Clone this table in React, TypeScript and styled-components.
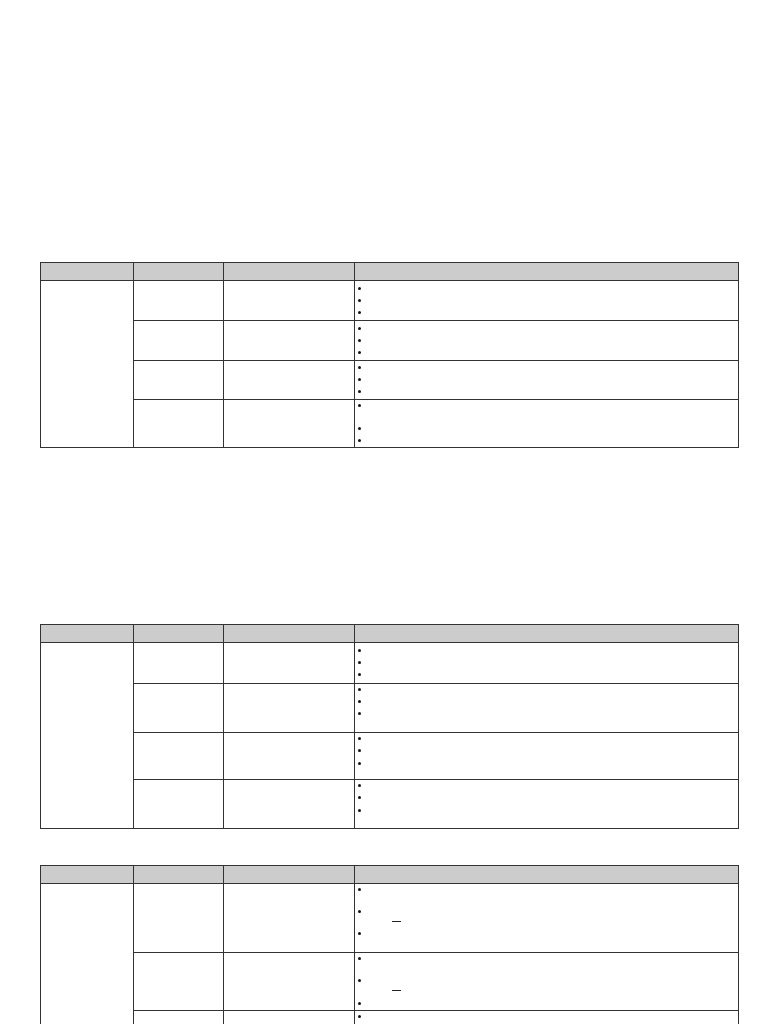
import styled, { createGlobalStyle } from "styled-components";

type Item = {
  h: number;
  frac?: boolean;
};

type Row = {
  h: number;
  items: Item[];
};

type TableData = {
  gap: number;
  rows: Row[];
};

const one = { h: 12 };

const tables: TableData[] = [
  {
    gap: 262,
    rows: [
      { h: 39, items: [one, one, one] },
      { h: 39, items: [one, one, one] },
      { h: 38, items: [one, one, one] },
      { h: 47, items: [{ h: 23 }, one, one] },
    ],
  },
  {
    gap: 176,
    rows: [
      { h: 40, items: [one, one, one] },
      { h: 48, items: [one, one, { h: 24 }] },
      { h: 46, items: [one, { h: 13 }, { h: 21 }] },
      { h: 48, items: [one, { h: 13 }, { h: 23 }] },
    ],
  },
  {
    gap: 36,
    rows: [
      { h: 68, items: [{ h: 22 }, { h: 22, frac: true }, { h: 24 }] },
      { h: 57, items: [{ h: 22 }, { h: 23, frac: true }, { h: 12 }] },
      { h: 57, items: [{ h: 22 }, { h: 23 }, { h: 12 }] },
    ],
  },
];

const GlobalStyle = createGlobalStyle`
  html, body {
    margin: 0;
    padding: 0;
    background: #ffffff;
  }
  body {
    font-family: "Liberation Sans", Arial, sans-serif;
    font-size: 11px;
    color: #000000;
  }
`;

const Page = styled.main`
  padding: 0 30px 40px 40px;
`;

const Section = styled.section<{ $gap: number }>`
  margin-top: ${({ $gap }) => $gap}px;
`;

const Table = styled.table`
  width: 698px;
  border-collapse: collapse;
  table-layout: fixed;
`;

const HeadCell = styled.th`
  background: #cccccc;
  border: 1px solid #333333;
  height: 17px;
  padding: 0;
`;

const Cell = styled.td<{ $h?: number }>`
  border: 1px solid #333333;
  padding: 0;
  vertical-align: middle;
  height: ${({ $h }) => ($h ? `${$h}px` : "auto")};
`;

const List = styled.ul`
  list-style: none;
  margin: 0;
  padding: 0;
`;

const Bullet = styled.li<{ $h: number }>`
  position: relative;
  display: flow-root;
  height: ${({ $h }) => $h}px;
  padding-left: 10px;

  &::before {
    content: "";
    position: absolute;
    left: 3px;
    top: 4px;
    width: 3px;
    height: 3px;
    border-radius: 50%;
    background: #111111;
  }
`;

const FracBar = styled.div`
  width: 9px;
  height: 1px;
  margin: 15px 0 0 27px;
  background: #222222;
`;

function DataTable({ rows }: { rows: Row[] }) {
  return (
    <Table>
      <colgroup>
        <col style={{ width: 93 }} />
        <col style={{ width: 90 }} />
        <col style={{ width: 131 }} />
        <col style={{ width: 384 }} />
      </colgroup>
      <thead>
        <tr>
          <HeadCell />
          <HeadCell />
          <HeadCell />
          <HeadCell />
        </tr>
      </thead>
      <tbody>
        {rows.map((row, i) => (
          <tr key={i}>
            {i === 0 && <Cell rowSpan={rows.length} />}
            <Cell $h={row.h} />
            <Cell />
            <Cell>
              <List>
                {row.items.map((item, j) => (
                  <Bullet key={j} $h={item.h}>
                    {item.frac && <FracBar />}
                  </Bullet>
                ))}
              </List>
            </Cell>
          </tr>
        ))}
      </tbody>
    </Table>
  );
}

export default function App() {
  return (
    <>
      <GlobalStyle />
      <Page>
        {tables.map((t, i) => (
          <Section key={i} $gap={t.gap}>
            <DataTable rows={t.rows} />
          </Section>
        ))}
      </Page>
    </>
  );
}
